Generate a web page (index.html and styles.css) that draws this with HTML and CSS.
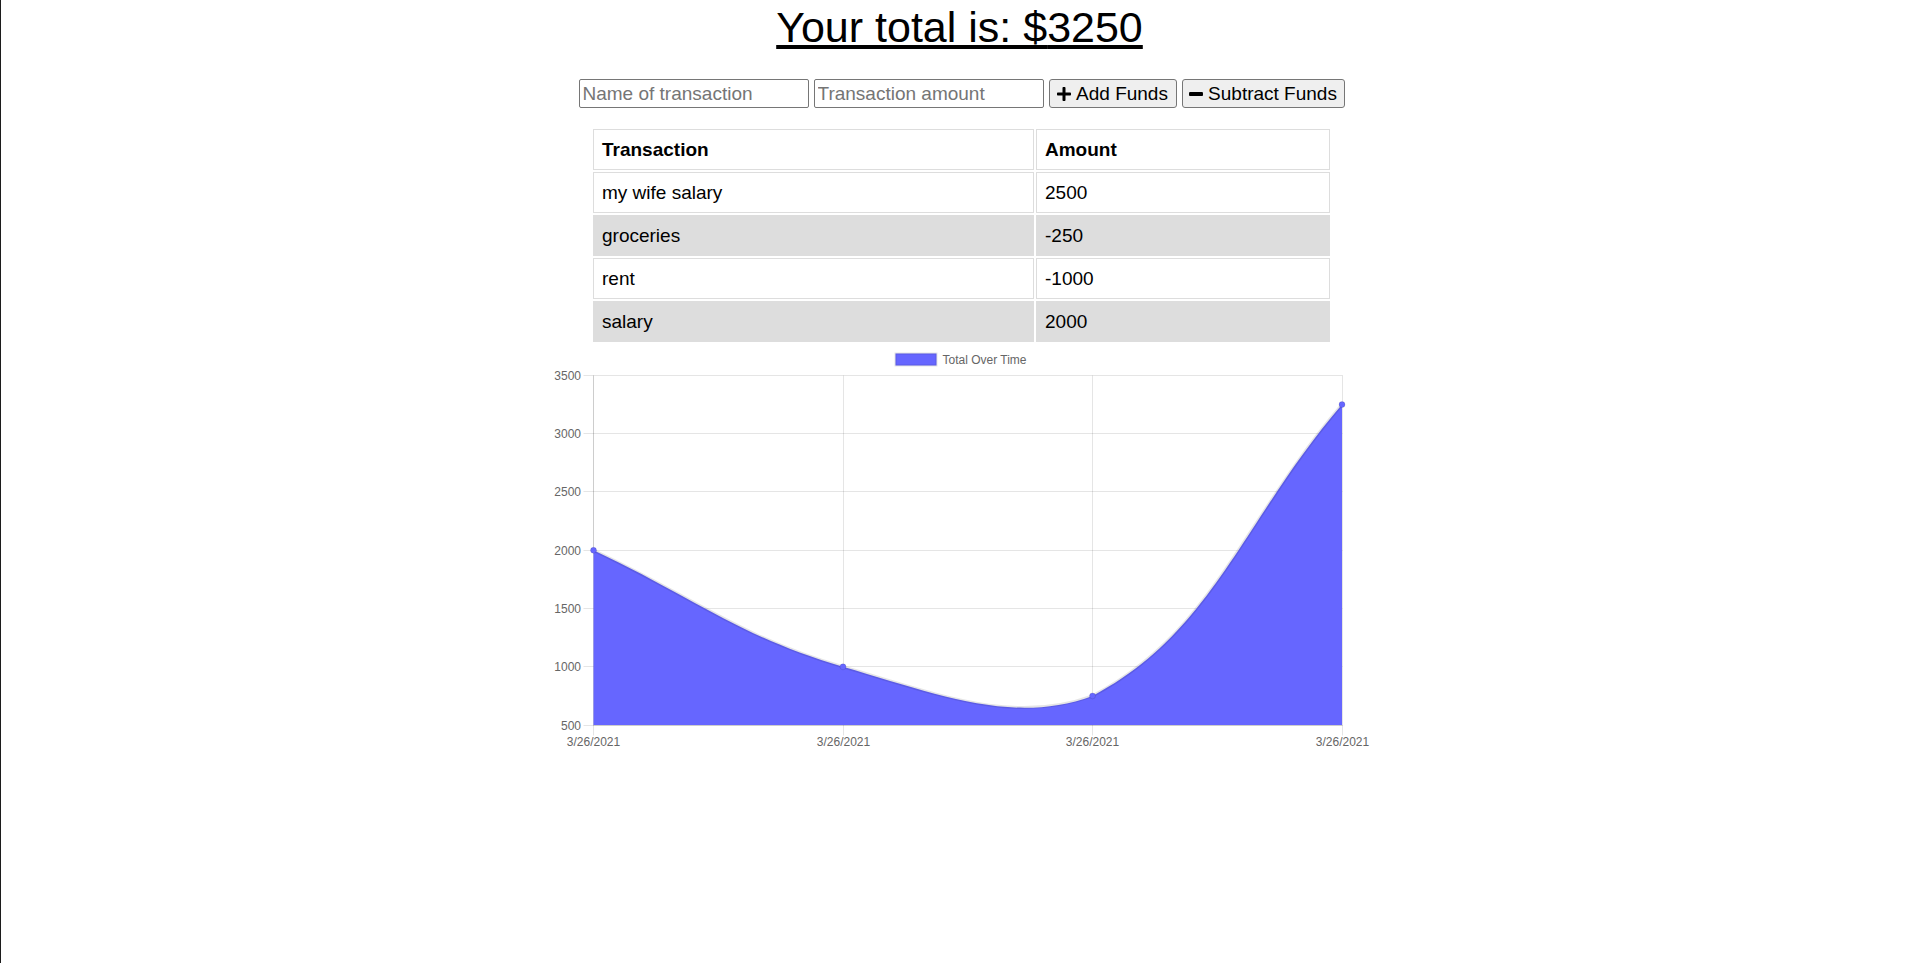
FILE: index.html
```html
<!DOCTYPE html>
<html lang="en">
<head>
    <meta charset="UTF-8">
    <meta name="viewport" content="width=device-width, initial-scale=1.0">
    <title>Budget Tracker</title>
    <link rel="stylesheet" href="styles.css">
</head>
<body>
    <h1 class="total">Your total is: $<span id="total">3250</span></h1>

    <form class="tx-form">
        <input type="text" id="t-name" placeholder="Name of transaction">
        <input type="text" id="t-amount" placeholder="Transaction amount">
        <button type="button" id="add-btn" class="btn btn-add">
            <svg class="icon" width="14" height="14" viewBox="0 32 448 448"><path d="M416 208H272V64c0-17.67-14.33-32-32-32h-32c-17.67 0-32 14.33-32 32v144H32c-17.67 0-32 14.33-32 32v32c0 17.67 14.33 32 32 32h144v144c0 17.67 14.33 32 32 32h32c17.670 0 32-14.33 32-32V304h144c17.67 0 32-14.33 32-32v-32c0-17.67-14.33-32-32-32z"/></svg>
            Add Funds
        </button>
        <button type="button" id="sub-btn" class="btn btn-sub">
            <svg class="icon" width="14" height="4" viewBox="0 208 448 96" preserveAspectRatio="none"><path d="M416 208H32c-17.67 0-32 14.33-32 32v32c0 17.67 14.33 32 32 32h384c17.67 0 32-14.33 32-32v-32c0-17.67-14.33-32-32-32z"/></svg>
            Subtract Funds
        </button>
    </form>

    <!-- Transactions -->
    <div class="table-wrap">
        <table>
            <thead>
                <tr>
                    <th class="col-name">Transaction</th>
                    <th class="col-amount">Amount</th>
                </tr>
            </thead>
            <tbody id="tbody">
                <tr><td>my wife salary</td><td>2500</td></tr>
                <tr><td>groceries</td><td>-250</td></tr>
                <tr><td>rent</td><td>-1000</td></tr>
                <tr><td>salary</td><td>2000</td></tr>
            </tbody>
        </table>
    </div>

    <!-- Chart -->
    <svg class="chart" width="832" height="420" viewBox="0 0 832 420">
        <rect class="legend-box" x="355.5" y="9.5" width="41" height="12"/>
        <text class="legend" x="402.5" y="16">Total Over Time</text>

        <g class="grid">
            <line x1="43.5" y1="31.5" x2="802.5" y2="31.5"/>
            <line x1="43.5" y1="89.5" x2="802.5" y2="89.5"/>
            <line x1="43.5" y1="147.5" x2="802.5" y2="147.5"/>
            <line x1="43.5" y1="206.5" x2="802.5" y2="206.5"/>
            <line x1="43.5" y1="264.5" x2="802.5" y2="264.5"/>
            <line x1="43.5" y1="322.5" x2="802.5" y2="322.5"/>
            <line x1="43.5" y1="381.5" x2="802.5" y2="381.5"/>
            <line x1="53.5" y1="31.5" x2="53.5" y2="391.5"/>
            <line x1="303.5" y1="31.5" x2="303.5" y2="391.5"/>
            <line x1="552.5" y1="31.5" x2="552.5" y2="391.5"/>
            <line x1="802.5" y1="31.5" x2="802.5" y2="391.5"/>
            <line x1="53.5" y1="31.5" x2="53.5" y2="381.5"/>
            <line x1="53.5" y1="381.5" x2="802.5" y2="381.5"/>
        </g>

        <g class="y-labels">
            <text x="41" y="31.5">3500</text>
            <text x="41" y="89.5">3000</text>
            <text x="41" y="147.5">2500</text>
            <text x="41" y="206.5">2000</text>
            <text x="41" y="264.5">1500</text>
            <text x="41" y="322.5">1000</text>
            <text x="41" y="381.5">500</text>
        </g>

        <g class="x-labels">
            <text x="53.5" y="397.5">3/26/2021</text>
            <text x="303.5" y="397.5">3/26/2021</text>
            <text x="552.5" y="397.5">3/26/2021</text>
            <text x="802.5" y="397.5">3/26/2021</text>
        </g>

        <path class="area" d="M53.5 381 L53.5 206.3 C153.1 252.9 198.5 292.4 303 322.8 C398.2 350.6 473.3 381 552.5 351.9 C673 288.6 702.2 177 802 60.6 L802 381 Z"/>
        <path class="line" d="M53.5 206.3 C153.1 252.9 198.5 292.4 303 322.8 C398.2 350.6 473.3 381 552.5 351.9 C673 288.6 702.2 177 802 60.6"/>

        <g class="points">
            <circle cx="53.5" cy="206.3" r="3"/>
            <circle cx="303" cy="322.8" r="3"/>
            <circle cx="552.5" cy="351.9" r="3"/>
            <circle cx="802" cy="60.6" r="3"/>
        </g>
    </svg>
</body>
</html>
```

FILE: styles.css
```css
* {
    box-sizing: border-box;
}

body {
    margin: 0;
    min-height: 100vh;
    background: #fff;
    color: #000;
    font-family: "Liberation Sans", Arial, sans-serif;
    box-shadow: inset 1px 0 #1c1c1c;
}

/* Total */
.total {
    margin: 3px 0 0;
    padding-left: 7px;
    font-size: 43px;
    font-weight: normal;
    line-height: 48px;
    text-align: center;
    text-decoration: underline;
}

/* Form */
.tx-form {
    display: flex;
    justify-content: center;
    gap: 5px;
    margin-top: 28px;
    padding-left: 11px;
}

.tx-form input {
    width: 230px;
    height: 29px;
    padding: 1px 3px;
    border: 1px solid #767676;
    border-radius: 2px;
    font-family: "Liberation Sans", Arial, sans-serif;
    font-size: 19px;
    color: #000;
}

.tx-form input::placeholder {
    color: #757575;
}

.btn {
    display: inline-flex;
    align-items: center;
    justify-content: center;
    gap: 5px;
    height: 29px;
    padding: 0 5px;
    border: 1px solid #767676;
    border-radius: 3px;
    background: #efefef;
    color: #000;
    font-family: "Liberation Sans", Arial, sans-serif;
    font-size: 19px;
    white-space: nowrap;
    cursor: pointer;
}

.btn-add {
    width: 128px;
}

.btn-sub {
    width: 163px;
}

.btn .icon {
    fill: #000;
    flex: none;
}

/* Table */
.table-wrap {
    margin-top: 19px;
    padding-left: 11px;
}

table {
    margin: 0 auto;
    width: 741px;
    border-spacing: 2px;
    table-layout: fixed;
    font-size: 19px;
}

th, td {
    padding: 8px 8px;
    border: 1px solid #ddd;
    line-height: 23px;
    text-align: left;
}

th.col-name {
    width: 441px;
}

th.col-amount {
    width: 294px;
}

tbody tr:nth-child(even) td {
    background: #ddd;
}

/* Chart */
.chart {
    display: block;
    margin: 0 auto;
    overflow: visible;
    font-family: "Liberation Sans", Arial, sans-serif;
    font-size: 12px;
}

.chart text {
    fill: #666;
    dominant-baseline: central;
}

.chart .legend-box {
    fill: #6666ff;
    stroke: rgba(0, 0, 0, 0.1);
    stroke-width: 2;
}

.chart .grid line {
    stroke: rgba(0, 0, 0, 0.1);
    stroke-width: 1;
}

.chart .y-labels text {
    text-anchor: end;
}

.chart .x-labels text {
    text-anchor: middle;
}

.chart .area {
    fill: #6666ff;
}

.chart .line {
    fill: none;
    stroke: rgba(0, 0, 0, 0.1);
    stroke-width: 3;
}

.chart .points circle {
    fill: #6666ff;
    stroke: rgba(0, 0, 0, 0.1);
    stroke-width: 1;
}
```
